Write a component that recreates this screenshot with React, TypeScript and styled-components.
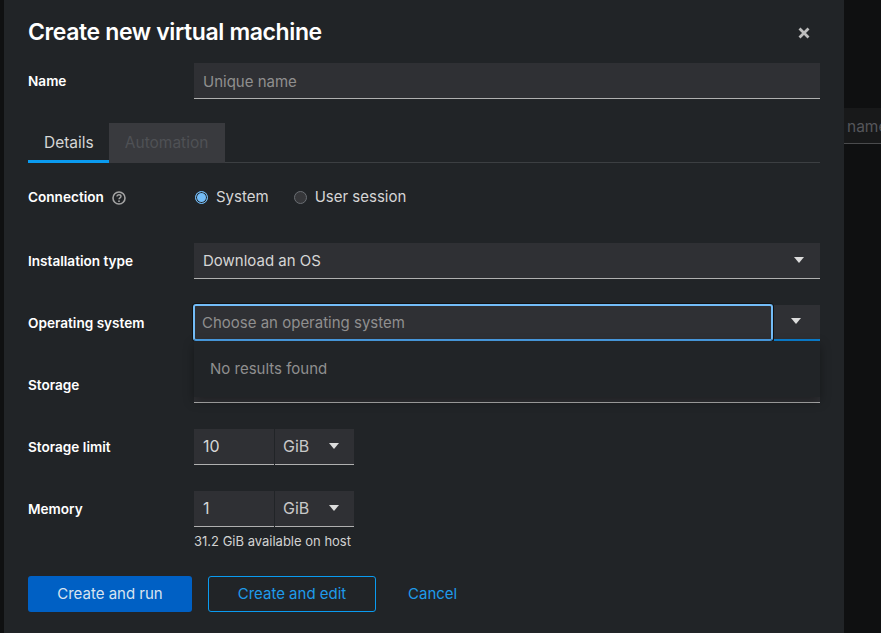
import React from "react";
import styled, { createGlobalStyle } from "styled-components";

const Global = createGlobalStyle`
  html, body { margin: 0; padding: 0; background: #0f1011; }
  body { font-family: "Inter", "Noto Sans", "Liberation Sans", sans-serif; }
  * { box-sizing: border-box; }
`;

const Stage = styled.div`
  width: 881px;
  height: 633px;
  overflow: hidden;
  display: flex;
  padding-left: 4px;
  background: #0f1011;
`;

const Modal = styled.div`
  width: 840px;
  height: 633px;
  flex: none;
  background: #212427;
  padding: 17px 24px 0;
  display: flex;
  flex-direction: column;
  position: relative;
`;

const Backdrop = styled.div`
  flex: 1;
  padding-top: 108px;
`;

const BackdropInput = styled.div`
  height: 36px;
  background: #18191a;
  border-bottom: 1px solid #4a4b4d;
  padding: 9px 0 0 3px;
  color: #55565a;
  font-size: 15.5px;
  line-height: 20px;
  white-space: nowrap;
  overflow: hidden;
`;

const Header = styled.div`
  display: flex;
  align-items: center;
  justify-content: space-between;
  height: 30px;
  padding-right: 10px;
`;

const Title = styled.h1`
  margin: 0;
  color: #fff;
  font-size: 23px;
  letter-spacing: -0.38px;
  line-height: 30px;
  font-weight: 600;
`;

const Close = styled.button`
  border: 0;
  background: none;
  padding: 0;
  margin: 2px 0 0;
  display: flex;
  color: #bdbdbd;
`;

const Row = styled.div<{ $top: number }>`
  display: grid;
  grid-template-columns: 166px 626px;
  align-items: center;
  margin-top: ${(p) => p.$top}px;
  position: relative;
`;

const Label = styled.label`
  display: flex;
  align-items: center;
  gap: 8px;
  color: #fff;
  font-size: 13.6px;
  font-weight: 600;
  line-height: 20px;
`;

const Help = styled.span`
  display: flex;
  color: #a3a3a3;
  margin-top: 2px;
`;

const Field = styled.div<{ $textInput?: boolean }>`
  height: 36px;
  background: #2f3034;
  border-bottom: 1px solid #b0b0b0;
  display: flex;
  align-items: center;
  justify-content: space-between;
  padding: ${(p) => (p.$textInput ? "1px 16px 0 9px" : "0 16px 1px 9px")};
  font-size: 15px;
  color: #d6d6d6;
`;

const Placeholder = styled.span`
  color: #8f8f8f;
`;

const Caret = styled.svg`
  width: 10px;
  height: 6px;
  flex: none;
  fill: #dcdcdc;
`;

const Tabs = styled.div`
  display: flex;
  height: 40px;
  margin-top: 24px;
  border-bottom: 1px solid #3c3f42;
`;

const Tab = styled.div<{ $active?: boolean }>`
  height: 40px;
  padding: ${(p) => (p.$active ? "1px 15px 0 16px" : "0 17px 1px 16px")};
  display: flex;
  align-items: center;
  font-size: 15.5px;
  color: ${(p) => (p.$active ? "#d6d6d6" : "#4f5155")};
  background: ${(p) => (p.$active ? "transparent" : "#393a3e")};
  border-bottom: ${(p) => (p.$active ? "3px solid #0a9bf0" : "0")};
`;

const Radios = styled.div`
  height: 36px;
  display: flex;
  align-items: center;
  gap: 24px;
`;

const RadioItem = styled.div`
  display: flex;
  align-items: center;
  gap: 8px;
  font-size: 15px;
  color: #d6d6d6;
  padding: 0 0 2px 1px;
`;

const RadioDot = styled.span<{ $on?: boolean }>`
  width: 13px;
  height: 13px;
  border-radius: 50%;
  margin-top: 3px;
  border: 1px solid ${(p) => (p.$on ? "#73bcf7" : "#6a6e73")};
  background: ${(p) => (p.$on ? "#73bcf7" : "#36373a")};
  box-shadow: ${(p) => (p.$on ? "inset 0 0 0 1px #212427" : "none")};
  flex: none;
`;

const ComboWrap = styled.div`
  display: flex;
  height: 36px;
  gap: 1px;
`;

const ComboInput = styled.div`
  flex: 1;
  height: 37px;
  margin: -1px 0 0 -1px;
  background: #2f3034;
  border: 2px solid #73bcf7;
  border-bottom-color: #4a9fe6;
  border-radius: 3px;
  box-shadow: 0 0 0 1px #101112;
  display: flex;
  align-items: center;
  padding-left: 7px;
  font-size: 15px;
  color: #8f8f8f;
`;

const ComboToggle = styled.div`
  width: 46px;
  background: #2f3034;
  border-bottom: 2px solid #0a7fd0;
  display: flex;
  align-items: center;
  justify-content: center;
  padding: 0 2px 2px 0;
`;

const Menu = styled.div`
  position: absolute;
  left: 166px;
  top: 36px;
  width: 626px;
  height: 56px;
  background: #212427;
  box-shadow: 0 4px 10px rgba(0, 0, 0, 0.35);
  padding: 18px 16px 0;
  font-size: 15px;
  line-height: 20px;
  color: #8f8f8f;
  z-index: 2;
`;

const Sizer = styled.div`
  display: flex;
  gap: 1px;
  width: 160px;
`;

const NumberBox = styled.div`
  width: 80px;
  height: 36px;
  background: #2f3034;
  border-bottom: 1px solid #b0b0b0;
  display: flex;
  align-items: center;
  padding: 0 0 2px 9px;
  font-size: 16px;
  color: #d6d6d6;
`;

const UnitBox = styled.div`
  width: 79px;
  height: 36px;
  background: #2f3034;
  border-bottom: 1px solid #b0b0b0;
  display: flex;
  align-items: center;
  justify-content: space-between;
  padding: 0 15px 2px 8px;
  font-size: 16px;
  color: #c8c8c8;
`;

const Hint = styled.div`
  font-size: 13px;
  line-height: 20px;
  color: #d2d2d2;
  margin: 4px 0 0 166px;
`;

const Actions = styled.div`
  display: flex;
  align-items: center;
  margin-top: 25px;
`;

const Primary = styled.button`
  width: 164px;
  height: 36px;
  border: 0;
  border-radius: 3px;
  background: #0060c4;
  color: #d8e4f0;
  font: inherit;
  font-size: 15px;
  padding: 0 0 1px;
`;

const Secondary = styled.button`
  width: 168px;
  height: 36px;
  margin-left: 16px;
  background: transparent;
  border: 1px solid #0a9bf0;
  border-radius: 3px;
  color: #1f9bea;
  font: inherit;
  font-size: 15px;
  padding: 0 0 1px;
`;

const LinkButton = styled.button`
  margin-left: 16px;
  padding: 0 16px 1px;
  height: 36px;
  border: 0;
  background: none;
  color: #1f9bea;
  font: inherit;
  font-size: 15px;
`;

const Down = () => (
  <Caret viewBox="0 0 10 6">
    <path d="M0 0h10L5 6z" />
  </Caret>
);

export default function App() {
  return (
    <>
      <Global />
      <Stage>
        <Modal>
          <Header>
            <Title>Create new virtual machine</Title>
            <Close aria-label="Close">
              <svg width="12" height="12" viewBox="0 0 12 12">
                <path d="M1.5 1.5l9 9M10.5 1.5l-9 9" stroke="currentColor" strokeWidth="2.8" fill="none" />
              </svg>
            </Close>
          </Header>
          <Row $top={16}>
            <Label>Name</Label>
            <Field $textInput>
              <Placeholder>Unique name</Placeholder>
            </Field>
          </Row>
          <Tabs>
            <Tab $active>Details</Tab>
            <Tab>Automation</Tab>
          </Tabs>
          <Row $top={16}>
            <Label>
              Connection
              <Help>
                <svg width="14" height="14" viewBox="0 0 14 14" fill="none">
                  <circle cx="7" cy="7" r="6" stroke="currentColor" strokeWidth="1.6" />
                  <path d="M5 5.6c0-1.1.9-1.8 2-1.8s2 .7 2 1.7c0 1.3-2 1.4-2 2.7" stroke="currentColor" strokeWidth="1.4" />
                  <circle cx="7" cy="10.2" r=".9" fill="currentColor" />
                </svg>
              </Help>
            </Label>
            <Radios>
              <RadioItem>
                <RadioDot $on />
                System
              </RadioItem>
              <RadioItem>
                <RadioDot />
                User session
              </RadioItem>
            </Radios>
          </Row>
          <Row $top={28}>
            <Label>Installation type</Label>
            <Field>
              Download an OS
              <Down />
            </Field>
          </Row>
          <Row $top={26}>
            <Label>Operating system</Label>
            <ComboWrap>
              <ComboInput>Choose an operating system</ComboInput>
              <ComboToggle>
                <Down />
              </ComboToggle>
            </ComboWrap>
            <Menu>No results found</Menu>
          </Row>
          <Row $top={26}>
            <Label>Storage</Label>
            <Field />
          </Row>
          <Row $top={26}>
            <Label>Storage limit</Label>
            <Sizer>
              <NumberBox>10</NumberBox>
              <UnitBox>
                GiB
                <Down />
              </UnitBox>
            </Sizer>
          </Row>
          <Row $top={26}>
            <Label>Memory</Label>
            <Sizer>
              <NumberBox>1</NumberBox>
              <UnitBox>
                GiB
                <Down />
              </UnitBox>
            </Sizer>
          </Row>
          <Hint>31.2 GiB available on host</Hint>
          <Actions>
            <Primary>Create and run</Primary>
            <Secondary>Create and edit</Secondary>
            <LinkButton>Cancel</LinkButton>
          </Actions>
        </Modal>
        <Backdrop>
          <BackdropInput>name</BackdropInput>
        </Backdrop>
      </Stage>
    </>
  );
}
